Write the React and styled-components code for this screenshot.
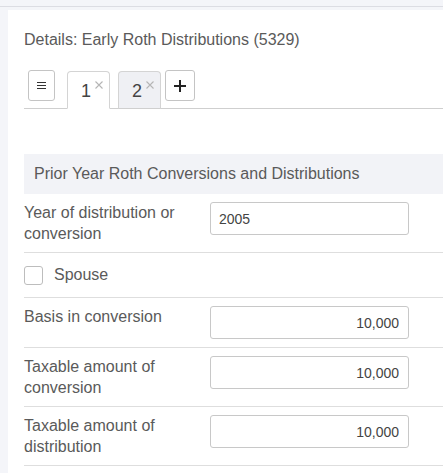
import React from 'react';
import styled, { createGlobalStyle } from 'styled-components';

const font = '"Liberation Sans", Arial, sans-serif';
const textGray = '#5a5a5a';

const GlobalStyle = createGlobalStyle`
  html, body {
    margin: 0;
    padding: 0;
    background: #f4f5f9;
    overflow: hidden;
  }
  body {
    font-family: ${font};
  }
`;

const TopBar = styled.div`
  height: 6px;
  border-bottom: 1px solid #dcdde3;
`;

const Panel = styled.div`
  margin: 3px 0 0 8px;
  background: #fff;
  padding: 20px 0 0 16px;
  min-height: 480px;
  box-sizing: border-box;
`;

const Title = styled.div`
  font-size: 16px;
  line-height: 19px;
  color: ${textGray};
`;

const TabStrip = styled.div`
  display: flex;
  align-items: flex-start;
  margin-top: 21px;
  padding-left: 4px;
  height: 38px;
  border-bottom: 1px solid #cfcfcf;
`;

const IconButton = styled.button`
  box-sizing: border-box;
  width: ${p => p.$w}px;
  height: 31px;
  margin-right: ${p => p.$after}px;
  padding: 0;
  border: 1px solid #c4c4c4;
  border-radius: 3px;
  background: #fff;
  display: flex;
  align-items: center;
  justify-content: center;
  cursor: pointer;
`;

const Tab = styled.div`
  box-sizing: border-box;
  width: 43px;
  height: 38px;
  margin-top: 1px;
  margin-right: ${p => p.$after}px;
  padding: 8px 0 0 13px;
  border: 1px solid #d4d4d4;
  border-bottom-color: ${p => (p.$active ? '#fff' : '#cfcfcf')};
  border-radius: 4px 4px 0 0;
  background: ${p => (p.$active ? '#fff' : '#eff0f4')};
  font-size: 18px;
  line-height: 22px;
  color: #444;
  display: flex;
  align-items: flex-start;
`;

const CloseMark = styled.svg`
  margin: 1px 0 0 4px;
  flex: none;
`;

const SectionHeader = styled.div`
  margin-top: 45px;
  height: 40px;
  background: #f2f3f7;
  padding-left: 10px;
  display: flex;
  align-items: center;
  font-size: 16px;
  color: ${textGray};
`;

const Row = styled.div`
  display: flex;
  align-items: ${p => (p.$center ? 'center' : 'flex-start')};
  padding: 8px 0;
  min-height: ${p => (p.$center ? '28px' : 'auto')};
  border-bottom: 1px solid #dedede;
`;

const Label = styled.div`
  width: 186px;
  flex: none;
  font-size: 16px;
  line-height: 21px;
  color: ${textGray};
`;

const Input = styled.input`
  box-sizing: border-box;
  width: 199px;
  height: 33px;
  border: 1px solid #c8c8c8;
  border-radius: 3px;
  padding: 0 9px 0 8px;
  font-family: ${font};
  font-size: 14px;
  color: #444;
  text-align: ${p => (p.$right ? 'right' : 'left')};
  outline: none;
`;

const CheckBox = styled.span`
  box-sizing: border-box;
  width: 19px;
  height: 19px;
  border: 1px solid #bdbdbd;
  border-radius: 3px;
  margin-right: 11px;
  flex: none;
`;

const CheckLabel = styled.span`
  font-size: 16px;
  color: ${textGray};
`;

const Close = () => (
  <CloseMark width="8" height="8" viewBox="0 0 8 8">
    <path d="M0.5 0.5L7.5 7.5M7.5 0.5L0.5 7.5" stroke="#b5b5b5" strokeWidth="1.1" fill="none" />
  </CloseMark>
);

const fields = [
  { label: ['Basis in conversion'], value: '10,000' },
  { label: ['Taxable amount of', 'conversion'], value: '10,000' },
  { label: ['Taxable amount of', 'distribution'], value: '10,000' },
];

export default function App() {
  return (
    <>
      <GlobalStyle />
      <TopBar />
      <Panel>
        <Title>Details: Early Roth Distributions (5329)</Title>
        <TabStrip>
          <IconButton $w={27} $after={12} aria-label="menu">
            <svg width="9" height="7" viewBox="0 0 9 7">
              <path d="M0 0.5H9M0 3.5H9M0 6.5H9" stroke="#333" strokeWidth="1" />
            </svg>
          </IconButton>
          <Tab $active $after={8}>
            1<Close />
          </Tab>
          <Tab $after={4}>
            2<Close />
          </Tab>
          <IconButton $w={30} $after={0} aria-label="add">
            <svg width="12" height="12" viewBox="0 0 12 12">
              <path d="M6 0V12M0 6H12" stroke="#222" strokeWidth="2" />
            </svg>
          </IconButton>
        </TabStrip>

        <SectionHeader>Prior Year Roth Conversions and Distributions</SectionHeader>

        <Row>
          <Label>
            Year of distribution or
            <br />
            conversion
          </Label>
          <Input defaultValue="2005" />
        </Row>

        <Row $center>
          <CheckBox />
          <CheckLabel>Spouse</CheckLabel>
        </Row>

        {fields.map(f => (
          <Row key={f.label.join(' ')}>
            <Label>
              {f.label.map((line, i) => (
                <React.Fragment key={line}>
                  {i > 0 && <br />}
                  {line}
                </React.Fragment>
              ))}
            </Label>
            <Input $right defaultValue={f.value} />
          </Row>
        ))}
      </Panel>
    </>
  );
}
